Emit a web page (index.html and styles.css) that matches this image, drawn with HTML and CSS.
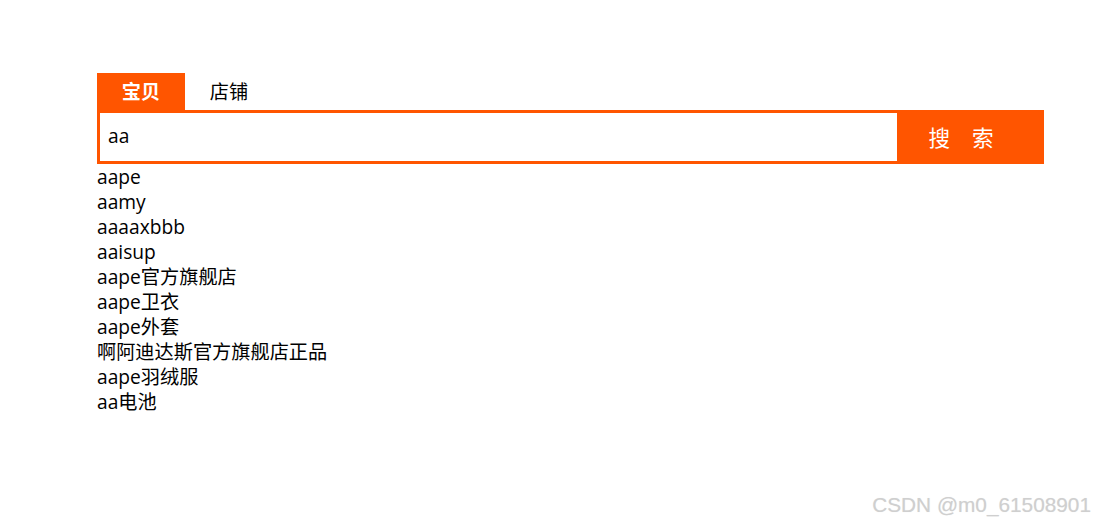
FILE: index.html
```html
<!DOCTYPE html>
<html lang="zh-CN">
<head>
<meta charset="utf-8">
<title>搜索</title>
<link rel="stylesheet" href="styles.css">
</head>
<body>
<div class="page">
  <div class="search">
    <div class="tabs">
      <div class="tab active">宝贝</div>
      <div class="tab">店铺</div>
    </div>
    <div class="bar">
      <div class="search-input">aa</div>
      <div class="search-btn">搜索</div>
    </div>
    <ul class="suggest">
      <li>aape</li>
      <li>aamy</li>
      <li>aaaaxbbb</li>
      <li>aaisup</li>
      <li>aape官方旗舰店</li>
      <li>aape卫衣</li>
      <li>aape外套</li>
      <li>啊阿迪达斯官方旗舰店正品</li>
      <li>aape羽绒服</li>
      <li>aa电池</li>
    </ul>
  </div>
  <div class="watermark">CSDN @m0_61508901</div>
</div>
</body>
</html>
```
FILE: styles.css
```css
html, body {
  margin: 0;
  padding: 0;
  background: #fff;
}
.page {
  position: relative;
  width: 1095px;
  height: 524px;
  padding: 73px 0 0 97px;
  box-sizing: border-box;
  font-family: "Open Sans", "Noto Sans CJK SC", sans-serif;
  font-size: 19.2px;
  color: #000;
}
.search {
  width: 947px;
}
.tabs {
  display: flex;
  height: 37px;
}
.tab {
  width: 88px;
  height: 37px;
  line-height: 37px;
  text-align: center;
  font-size: 19.2px;
}
.tab.active {
  background: #ff5500;
  color: #fff;
  font-weight: bold;
}
.bar {
  display: flex;
  height: 54px;
}
.search-input {
  width: 800px;
  height: 54px;
  box-sizing: border-box;
  border: 3px solid #ff5500;
  border-right: none;
  padding: 0 0 3px 8px;
  display: flex;
  align-items: center;
  font-size: 19.2px;
}
.search-btn {
  flex: 1;
  background: #ff5500;
  color: #fff;
  display: flex;
  align-items: center;
  justify-content: center;
  font-size: 21.6px;
  letter-spacing: 22px;
  padding: 0 0 2px 3px;
  box-sizing: border-box;
}
.suggest {
  list-style: none;
  margin: 0;
  padding: 0;
}
.suggest li {
  line-height: 25px;
  height: 25px;
}
.watermark {
  position: absolute;
  right: 4px;
  bottom: 7px;
  font-family: "Liberation Sans", Arial, sans-serif;
  font-size: 20.8px;
  color: #cfcfcf;
  text-shadow: 0 0 1px #e6e6e6;
}
```
